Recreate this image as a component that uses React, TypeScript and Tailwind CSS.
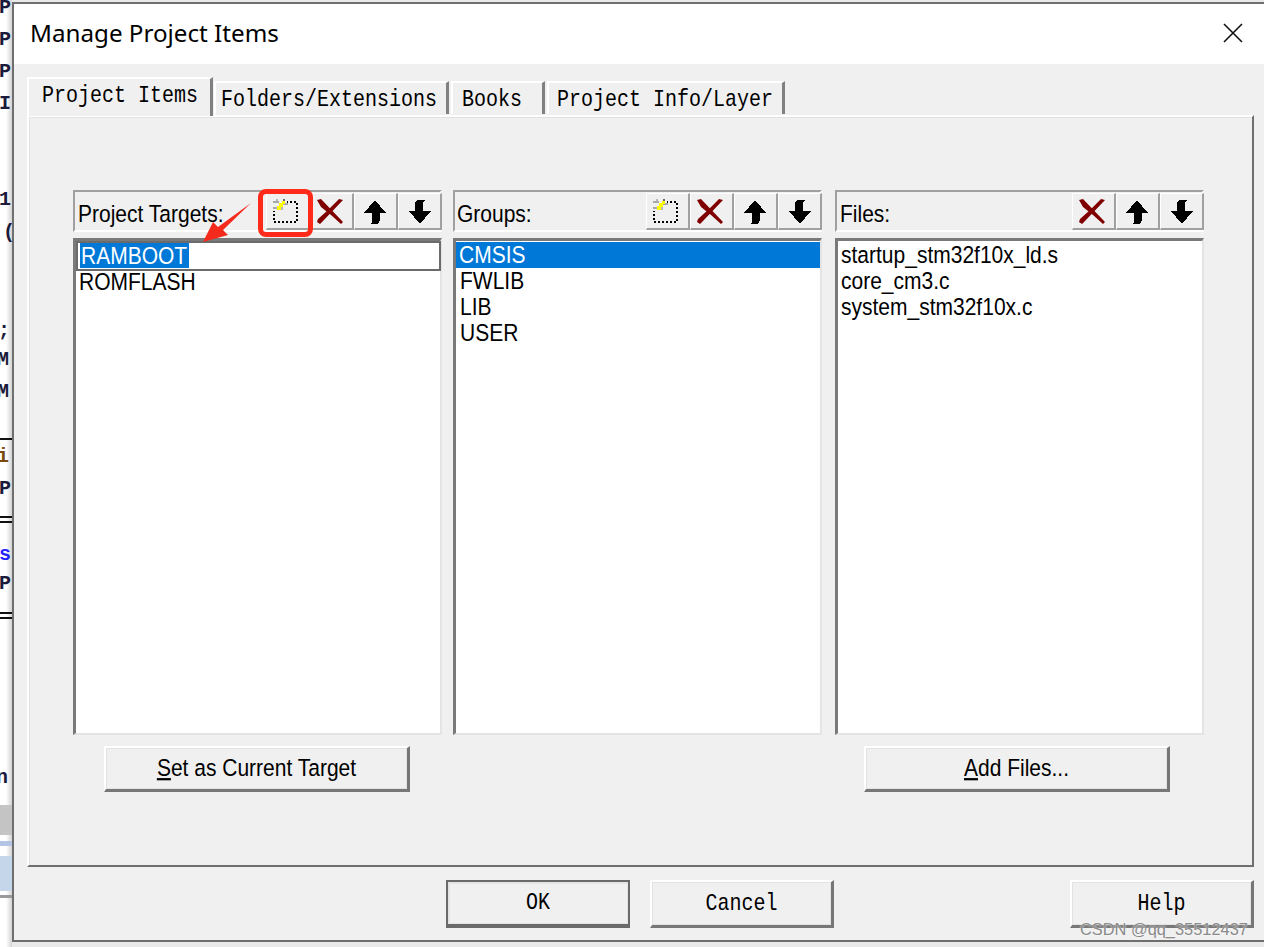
import React from "react";

const sans = "font-['Liberation_Sans',Arial,sans-serif] text-[21px] leading-[26px] text-black";
const mono = "font-['Liberation_Mono','Courier_New',monospace] text-[20px] leading-[26px] text-black";
const tallSans = "inline-block scale-y-[1.12]";
const tallMono = "inline-block scale-y-[1.22]";

function NewIcon() {
  return (
    <svg width="28" height="26" viewBox="0 0 28 26" shapeRendering="crispEdges" className="-ml-[3px]">
      <rect x="2" y="3" width="23" height="20" fill="none" stroke="#000" strokeWidth="2" strokeDasharray="2 2" />
      <rect x="0" y="0" width="15" height="12" fill="#f0f0f0" />
      <rect x="1" y="2" width="6" height="2" fill="#a8a8a8" />
      <rect x="1" y="8" width="5" height="2" fill="#a8a8a8" />
      <rect x="11" y="4" width="5" height="2" fill="#a8a8a8" />
      <rect x="4" y="0" width="2" height="2" fill="#b8b8b8" />
      <rect x="7" y="4" width="4" height="4" fill="#ffff00" />
      <rect x="5" y="7" width="4" height="4" fill="#ffff00" />
      <rect x="10" y="2" width="3" height="3" fill="#ffff00" />
      <rect x="11" y="0" width="2" height="2" fill="#666" />
      <rect x="9" y="8" width="2" height="3" fill="#b8b8b8" />
    </svg>
  );
}

function DelIcon() {
  return (
    <svg width="28" height="26" viewBox="0 0 28 26" className="-ml-[4px]">
      <polygon points="1,1 5,0 27,23 25,25 15,16 5,8" fill="#800000" />
      <polygon points="23,0 27,1 7,22 4,25 1,23 2,20 12,11" fill="#800000" />
    </svg>
  );
}

function UpIcon() {
  return (
    <svg width="24" height="26" viewBox="0 0 24 26" shapeRendering="crispEdges" className="-ml-[1px]">
      <polygon points="12,1 23,14 17,14 17,21 15,25 7,25 9,23 9,14 1,14" fill="#000" />
    </svg>
  );
}

function DownIcon() {
  return (
    <svg width="24" height="26" viewBox="0 0 24 26" shapeRendering="crispEdges">
      <polygon points="17,1 9,1 7,4 7,12 1,12 12,25 23,12 15,12 15,3" fill="#000" />
    </svg>
  );
}

function ToolBtn({ children }: { children: React.ReactNode }) {
  return (
    <div className="w-[44px] h-[37px] pt-[1px] flex items-center justify-center bg-[#f0f0f0] border-t border-l border-white border-r-2 border-b-2 border-r-[#a0a0a0] border-b-[#a0a0a0]">
      {children}
    </div>
  );
}

function Header({ label, isNew, pad = "pl-[3px]" }: { label: string; isNew?: boolean; pad?: string }) {
  return (
    <div className={"h-[42px] flex items-center justify-between border-t-2 border-l-2 border-[#a0a0a0] border-r-2 border-r-white border-b-2 border-b-white " + pad}>
      <span className={sans + " text-[#111] mt-[5px] inline-block scale-y-[1.12]"}>{label}</span>
      <div className="flex self-end -mr-[2px]">
        {isNew && <ToolBtn><NewIcon /></ToolBtn>}
        <ToolBtn><DelIcon /></ToolBtn>
        <ToolBtn><UpIcon /></ToolBtn>
        <ToolBtn><DownIcon /></ToolBtn>
      </div>
    </div>
  );
}

function ListBox({ children }: { children: React.ReactNode }) {
  return (
    <div className="mt-[6px] h-[497px] bg-white border-t-[3px] border-l-[3px] border-t-[#7a7a7a] border-l-[#7a7a7a] border-r-2 border-b-2 border-r-[#e4e4e4] border-b-[#e4e4e4] pt-[1px]">
      {children}
    </div>
  );
}

function Row({ children, cls = "pl-[3px]" }: { children: React.ReactNode; cls?: string }) {
  return (
    <div className={sans + " h-[26px] whitespace-nowrap " + cls}>
      <span className={tallSans}>{children}</span>
    </div>
  );
}

function ActionBtn({ children }: { children: React.ReactNode }) {
  return (
    <div className={sans + " w-[306px] h-[46px] flex items-center justify-center bg-[#f0f0f0] border-t-2 border-l-2 border-white border-r-[3px] border-b-[3px] border-r-[#777] border-b-[#777] shadow-[inset_1px_1px_0_#e2e2e2,inset_-1px_-1px_0_#e2e2e2]"}>
      <span className={tallSans + " -translate-y-[1px]"}>{children}</span>
    </div>
  );
}

function DlgBtn({ children, def }: { children: React.ReactNode; def?: boolean }) {
  return (
    <div
      className={
        mono +
        " w-[184px] h-[48px] flex items-center justify-center bg-[#f0f0f0] " +
        (def
          ? "border-2 border-[#6a6a6a] border-b-4 shadow-[inset_2px_2px_0_#e4e4e4,inset_-1px_-1px_0_#e4e4e4]"
          : "border-t-2 border-l-2 border-white border-r-[3px] border-b-[3px] border-r-[#777] border-b-[#777] shadow-[inset_1px_1px_0_#e2e2e2,inset_-1px_-1px_0_#e2e2e2]")
      }
    >
      <span className={tallMono}>{children}</span>
    </div>
  );
}

function Tab({ label, cls }: { label: string; cls: string }) {
  return (
    <div className={mono + " " + cls + " h-[33px] pt-[4px] bg-[#f0f0f0] border-t-2 border-l-2 border-white border-r-[3px] border-r-[#808080] whitespace-nowrap"}>
      <span className={tallMono}>{label}</span>
    </div>
  );
}

function CodeStrip() {
  return (
    <div className="w-[12px] h-[947px] shrink-0 overflow-hidden bg-linear-to-r from-white via-white to-[#d4d4d4] font-['Liberation_Mono',monospace] text-[20px] leading-[30px] font-bold text-[#1a1a3a] flex flex-col">
      <div className="h-[32px] shrink-0 -mt-[7px] -ml-[1px]">P</div>
      <div className="h-[32px] shrink-0 -ml-[1px]">P</div>
      <div className="h-[32px] shrink-0 -ml-[1px]">P</div>
      <div className="h-[96px] shrink-0 -ml-[1px]">I</div>
      <div className="h-[33px] shrink-0 -ml-[1px]">1</div>
      <div className="h-[98px] shrink-0 pl-[3px]">(</div>
      <div className="h-[29px] shrink-0 -ml-[2px]">;</div>
      <div className="h-[32px] shrink-0 -ml-[3px]">M</div>
      <div className="h-[61px] shrink-0 -ml-[3px]">M</div>
      <div className="h-[2px] shrink-0 bg-[#111] mb-[2px]"></div>
      <div className="h-[32px] shrink-0 -ml-[3px] text-[#7a4a10]">i</div>
      <div className="h-[42px] shrink-0 -ml-[1px]">P</div>
      <div className="h-[7px] shrink-0 border-y-2 border-[#111] mb-[17px]"></div>
      <div className="h-[29px] shrink-0 -ml-[1px] text-[#2222ff]">s</div>
      <div className="h-[43px] shrink-0 -ml-[1px]">P</div>
      <div className="h-[7px] shrink-0 border-y-2 border-[#111] mb-[144px]"></div>
      <div className="h-[42px] shrink-0 -ml-[4px]">n</div>
      <div className="h-[30px] shrink-0 bg-[#c4c4c4]"></div>
      <div className="h-[6px] shrink-0"></div>
      <div className="h-[5px] shrink-0 bg-[#b4c4e4]"></div>
      <div className="h-[10px] shrink-0"></div>
      <div className="h-[35px] shrink-0 bg-[#c6d6ea]"></div>
      <div className="h-[4px] shrink-0"></div>
      <div className="h-[3px] shrink-0 bg-[#9a9a9a]"></div>
    </div>
  );
}

export default function App() {
  return (
    <div className="relative w-[1264px] h-[947px] overflow-hidden bg-[#e9e9e9] flex">
      <div className="absolute left-[14px] -top-[17px] z-0 font-['Liberation_Mono',monospace] text-[20px] leading-[24px] font-bold text-[#222] whitespace-pre">
        {"Pot V  :   3551 Vo  :  1    55"}
      </div>
      <CodeStrip />
      <div className="relative z-10 mt-[2px] h-[940px] flex-1 flex flex-col bg-[#f0f0f0] border-l-2 border-t-2 border-b-2 border-[#6f6f6f]">
        <div className="h-[60px] shrink-0 bg-white flex items-center justify-between pl-[16px] pr-[21px]">
          <span className="font-['Noto_Sans',sans-serif] text-[24.2px] leading-[32px] text-black -mt-[2px]">Manage Project Items</span>
          <svg width="20" height="20" viewBox="0 0 20 20" className="-mt-[3px]">
            <path d="M1 1 L19 19 M19 1 L1 19" stroke="#111" strokeWidth="1.6" fill="none" />
          </svg>
        </div>

        <div className="ml-[13px] mr-[10px] mt-[13px] h-[39px] flex items-end relative z-10">
          <div className={mono + " w-[186px] h-[39px] pl-[13px] pt-[4px] bg-[#f0f0f0] border-t-2 border-l-2 border-white border-r-[3px] border-r-[#808080] whitespace-nowrap"}>
            <span className={tallMono}>Project Items</span>
          </div>
          <div className="flex items-start gap-[2px] mb-[2px] ml-[1px]">
            <Tab label="Folders/Extensions" cls="w-[235px] pl-[5px]" />
            <Tab label="Books" cls="w-[94px] pl-[9px]" />
            <Tab label="Project Info/Layer" cls="w-[238px] pl-[8px]" />
          </div>
        </div>

        <div className="ml-[13px] mr-[10px] -mt-[1px] h-[752px] shrink-0 border-t-2 border-l-2 border-white border-r-2 border-b-2 border-r-[#6f6f6f] border-b-[#6f6f6f] shadow-[inset_1px_1px_0_#e2e2e2] pt-[73px] pl-[44px] flex">
          <div className="w-[369px] flex flex-col relative">
            <Header label="Project Targets:" isNew />
            <ListBox>
              <div className="h-[30px] -mt-[1px] border-2 border-[#6b6b6b] pl-[2px] -mr-[1px]">
                <span className={sans + " inline-block h-[25px] leading-[25px] bg-[#0078d7] text-white pl-[1px] pr-[2px]"}>
                  <span className={tallSans}>RAMBOOT</span>
                </span>
              </div>
              <Row cls="-mt-[2px] pl-[3px]">ROMFLASH</Row>
            </ListBox>
            <div className="mt-[11px] ml-[31px]"><ActionBtn><span className="underline">S</span>et as Current Target</ActionBtn></div>
            <div className="absolute left-[185px] -top-[1px] w-[55px] h-[48px] border-[5px] border-[#ff2a1a] rounded-[8px]"></div>
            <svg className="absolute left-[128px] top-[12px]" width="52" height="42" viewBox="0 0 52 42">
              <polygon points="50,1 22,28 27,33 2,40 12,20 17,25" fill="#f42a1c" />
            </svg>
          </div>
          <div className="w-[369px] ml-[11px] flex flex-col">
            <Header label="Groups:" isNew pad="pl-[2px]" />
            <ListBox>
              <Row cls="bg-[#0078d7] !text-white pl-[3px]">CMSIS</Row>
              <Row cls="pl-[4px]">FWLIB</Row>
              <Row cls="pl-[4px]">LIB</Row>
              <Row cls="pl-[4px]">USER</Row>
            </ListBox>
          </div>
          <div className="w-[369px] ml-[13px] flex flex-col">
            <Header label="Files:" />
            <ListBox>
              <Row>startup_stm32f10x_ld.s</Row>
              <Row>core_cm3.c</Row>
              <Row>system_stm32f10x.c</Row>
            </ListBox>
            <div className="mt-[11px] ml-[29px]"><ActionBtn><span className="underline">A</span>dd Files...</ActionBtn></div>
          </div>
        </div>

        <div className="mt-[13px] flex ml-[432px]">
          <DlgBtn def>OK</DlgBtn>
          <div className="ml-[20px]"><DlgBtn>Cancel</DlgBtn></div>
          <div className="ml-[236px]"><DlgBtn>Help</DlgBtn></div>
        </div>
      </div>
      <div className="absolute z-20 left-[1080px] top-[919px] font-['Liberation_Sans',sans-serif] text-[16.4px] leading-[20px] text-[#8a8a8a] [text-shadow:0_0_2px_#fff] whitespace-nowrap">
        CSDN @qq_35512437
      </div>
    </div>
  );
}
